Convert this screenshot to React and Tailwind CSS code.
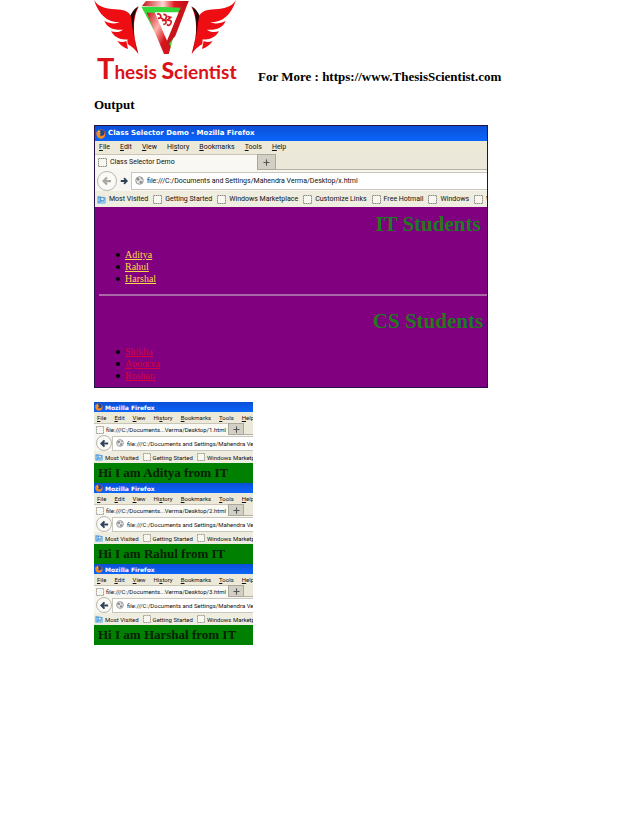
import React from "react";
import { Plus } from "lucide-react";

const menuItems = [
  ["", "F", "ile"],
  ["", "E", "dit"],
  ["", "V", "iew"],
  ["Hi", "s", "tory"],
  ["", "B", "ookmarks"],
  ["", "T", "ools"],
  ["", "H", "elp"],
];

const bookmarks = [
  "Getting Started",
  "Windows Marketplace",
  "Customize Links",
  "Free Hotmail",
  "Windows",
  "W",
];

const large = {
  text: "text-[7px]",
  title: "h-[15px] text-[7px] px-px gap-[2px]",
  titleIcon: "size-[10px]",
  menu: "h-[13px] pl-[4px] gap-[10px]",
  tabs: "h-4",
  tab: "w-[162px] pl-[3px] gap-[3px]",
  plusTab: "w-[19px]",
  bar: "h-[21px] pl-[2px]",
  input: "h-4 text-[7px]",
  marks: "h-[16px] pl-[2px] gap-[5px]",
  markGap: "gap-[3px]",
  box: "size-[9px]",
  back: "size-[20px]",
};

const small = {
  text: "text-[6px]",
  title: "h-[10px] text-[6px] px-px gap-[2px]",
  titleIcon: "size-[8px]",
  menu: "h-[11px] pl-[3px] gap-[8px]",
  tabs: "h-3",
  tab: "w-[134px] pl-[2px] gap-[2px]",
  plusTab: "w-4",
  bar: "h-4 pl-[2px]",
  input: "h-[13px] text-[6px]",
  marks: "h-3 pl-px gap-[4px]",
  markGap: "gap-[2px]",
  box: "size-[8px]",
  back: "size-4",
};

const FirefoxIcon = ({ className }) => (
  <svg viewBox="0 0 20 20" className={className}>
    <circle cx="10" cy="10" r="9" fill="#e2661a" />
    <circle cx="11" cy="8" r="6" fill="#25468f" />
    <path d="M1 5c2 1 3 2 6 2 2 0 3 1 2 3-2 1-1 4 2 4 4 0 6-2 6-6 3 6-1 11-7 11S0 14 1 5z" fill="#f08a24" />
    <path d="M4 3c2 0 4 1 5 3l-4 2z" fill="#f7c04a" />
  </svg>
);

const Globe = ({ className }) => (
  <svg viewBox="0 0 20 20" className={className}>
    <circle cx="10" cy="10" r="8.5" fill="#e4e4e4" stroke="#8f8f8f" strokeWidth="2" />
    <path d="M4 6c3-3 5-1 6 1s-2 3-4 3-3-2-2-4zM10 12c2-2 5-1 6 0-1 3-3 5-5 5 0-2-1-3-1-5zM12 3l4 3-2 2z" fill="#8a8a8a" />
  </svg>
);

const Arrow = ({ className, color, flip }) => (
  <svg viewBox="0 0 20 20" className={className}>
    <path
      d={flip ? "M2 10h14M10 3l7 7-7 7" : "M18 10H4M10 3l-7 7 7 7"}
      fill="none"
      stroke={color}
      strokeWidth="4.5"
    />
  </svg>
);

const VisitedIcon = ({ className }) => (
  <svg viewBox="0 0 20 20" className={className}>
    <path d="M1 3h7l2 2h9v14H1z" fill="#5aa5e0" />
    <path d="M3 7h15v11H3z" fill="#8cc6f0" />
    <circle cx="12" cy="9" r="4" fill="#d9efff" stroke="#2c6cab" strokeWidth="1.5" />
    <path d="M9 12l-5 5" stroke="#2c6cab" strokeWidth="2" />
  </svg>
);

const PageIcon = ({ className }) => (
  <svg viewBox="0 0 18 18" className={`shrink-0 ${className}`}>
    <rect x="1" y="1" width="16" height="16" fill="#f8f7f0" stroke="#8f8f88" strokeWidth="2" strokeDasharray="3 1" />
  </svg>
);

const Browser = ({ s, title, tab, url, marks, forward, children }) => (
  <div className={`overflow-hidden whitespace-nowrap font-['Roboto',sans-serif] text-[#111] ${s.text}`}>
    <div className={`flex items-center bg-linear-to-b from-[#0c4fd6] to-[#0a66fb] font-bold text-white font-['DejaVu_Sans',sans-serif] ${s.title}`}>
      <FirefoxIcon className={`shrink-0 ${s.titleIcon}`} />
      <span>{title}</span>
    </div>
    <div className={`flex items-center bg-[#ece9d8] ${s.menu}`}>
      {menuItems.map(([before, key, after]) => (
        <button key={key + after} type="button" className="shrink-0">
          {before}
          <u>{key}</u>
          {after}
        </button>
      ))}
    </div>
    <div className={`flex bg-[#ebe8d9] ${s.tabs}`}>
      <button type="button" className={`flex shrink-0 items-center border-t border-[#c9c6b8] bg-[#f9f8f3] ${s.tab}`}>
        <PageIcon className={s.box} />
        <span>{tab}</span>
      </button>
      <button
        type="button"
        aria-label="New tab"
        className={`flex shrink-0 items-center justify-center border border-[#aaa89c] bg-[#d2d0c4] ${s.plusTab}`}
      >
        <Plus size={9} strokeWidth={3} color="#555" />
      </button>
      <div className="flex-1 border-b border-[#b5b2a4]" />
    </div>
    <div className={`flex items-center bg-[#f7f6f0] ${s.bar}`}>
      <button
        type="button"
        aria-label="Back"
        className={`flex shrink-0 items-center justify-center rounded-full border border-[#b9b7ac] bg-[#fbfaf6] ${s.back}`}
      >
        <Arrow className={forward ? "size-[10px]" : "size-[9px]"} color={forward ? "#a9a9a4" : "#2f4358"} />
      </button>
      {forward && (
        <button type="button" aria-label="Forward" className="mx-[3px] shrink-0">
          <Arrow className="size-[8px]" color="#2f4358" flip />
        </button>
      )}
      <div className="flex min-w-0 flex-1 items-center gap-[3px] border-y border-l border-[#c9c7bc] bg-white pl-[3px]">
        <Globe className={`shrink-0 ${s.box}`} />
        <input aria-label="Address" readOnly value={url} className={`min-w-0 flex-1 bg-transparent outline-none ${s.input}`} />
      </div>
    </div>
    <div className={`flex items-center bg-[#efede0] ${s.marks}`}>
      <button type="button" className={`flex shrink-0 items-center ${s.markGap}`}>
        <VisitedIcon className={s.box} />
        Most Visited
      </button>
      {marks.map((name) => (
        <button key={name} type="button" className={`flex shrink-0 items-center ${s.markGap}`}>
          <PageIcon className={s.box} />
          {name}
        </button>
      ))}
    </div>
    {children}
  </div>
);

const StudentList = ({ names, color }) => (
  <ul className="pl-[17px] text-left text-[10px] leading-3">
    {names.map((name) => (
      <li key={name} className="flex items-center gap-[5px] before:size-1 before:rounded-full before:bg-black">
        <a href="#" className={`underline ${color}`}>{name}</a>
      </li>
    ))}
  </ul>
);

const Wing = () => (
  <g>
    <path
      d="M18 0C28 18 50 27 82 28C106 29 121 34 127 46L133 58C137 40 139 29 152 20C142 38 136 65 138 95C139 120 147 142 151 162C143 150 131 139 119 132L118 118C99 121 79 112 69 94C83 98 96 97 105 89C79 91 57 84 49 62C63 70 80 73 96 67C62 68 33 48 18 0Z"
      fill="#ee0d12"
    />
    <path d="M88 123C100 127 108 126 115 123L120 147C104 142 95 132 88 123Z" fill="#ee0d12" />
    <path d="M152 18C134 29 131 42 127 46C133 60 132 100 151 163C142 139 137 111 137 81C137 53 141 34 152 18Z" fill="#240508" />
  </g>
);

const Logo = () => (
  <div className="w-[142px] shrink-0">
    <svg viewBox="18 0 426 165" className="block h-[55px] w-full" role="img" aria-label="Winged triangle">
      <defs>
        <linearGradient id="bar" x1="0" x2="1">
          <stop offset="0" stopColor="#c5101a" />
          <stop offset=".45" stopColor="#ffd8d2" />
          <stop offset=".7" stopColor="#df1820" />
          <stop offset="1" stopColor="#b80d16" />
        </linearGradient>
        <linearGradient id="side" x1="0" y1="0" x2="1" y2="1">
          <stop offset="0" stopColor="#c5101a" />
          <stop offset=".4" stopColor="#ffb5ad" />
          <stop offset=".7" stopColor="#d4141c" />
        </linearGradient>
      </defs>
      <Wing />
      <g transform="translate(462 0) scale(-1 1)">
        <Wing />
      </g>
      <path d="M160 20L200 20L292 22L262 90L242 162H236Z" fill="#35d83a" />
      <path d="M162 18L174 3H302L292 24Z" fill="url(#bar)" />
      <path d="M176 38H205L248 140L242 162H228Z" fill="url(#side)" />
      <path d="M278 24L302 3L262 108L240 134L232 110Z" fill="#c9141c" />
      <path d="M200 37H272L237 122Z" fill="#fff" />
      <path
        d="M207 43q8-4 11 4t-8 8m5-4l12 8m-1-16q12 0 8 12l-6 8m10-14l10 3-10 8 10 2m-26 0q10-4 12 3t-8 8m18-12q9 1 4 10t-11 2"
        fill="none"
        stroke="#d31a22"
        strokeWidth="5"
      />
    </svg>
    <div className="whitespace-nowrap pl-[3px] font-['Lato',sans-serif] text-[19px] font-bold leading-[26px] text-[#dc1219]">
      <span className="text-[29px]">T</span>hesis <span className="text-[23px] font-black">S</span>cientis<span className="font-black">t</span>
    </div>
  </div>
);

const students = [
  { name: "Aditya", file: "1.html" },
  { name: "Rahul", file: "2.html" },
  { name: "Harshal", file: "3.html" },
];

export default function App() {
  return (
    <main className="min-h-screen bg-white pl-[94px] font-['Liberation_Serif',serif] text-black">
      <header className="flex items-end gap-[22px]">
        <Logo />
        <p className="whitespace-nowrap text-[13px] font-bold leading-4">
          For More : <a href="https://www.ThesisScientist.com">https://www.ThesisScientist.com</a>
        </p>
      </header>
      <h1 className="mt-3 text-[13px] font-bold leading-4">Output</h1>

      <section className="mt-3 max-w-[394px] border border-[#25104a]">
        <Browser
          s={large}
          title="Class Selector Demo - Mozilla Firefox"
          tab="Class Selector Demo"
          url="file:///C:/Documents and Settings/Mahendra Verma/Desktop/x.html"
          marks={bookmarks}
          forward
        >
          <div className="overflow-hidden bg-[#800080] pb-[5px] pl-[4px] font-['Liberation_Serif',serif]">
            <div className="w-[658px] text-center">
              <h2 className="pt-[5px] text-[21px] font-bold leading-6 text-[#1f7a1f]">IT Students</h2>
              <div className="pt-[13px]">
                <StudentList names={["Aditya", "Rahul", "Harshal"]} color="text-[#ffd84a]" />
              </div>
              <hr className="mt-[9px] border-t-2 border-[#a76aa7]" />
              <h2 className="pt-[13px] text-[21px] font-bold leading-6 text-[#1f7a1f]">CS Students</h2>
              <div className="pt-[13px]">
                <StudentList names={["Shikha", "Apoorva", "Roshan"]} color="text-[#d8003c]" />
              </div>
            </div>
          </div>
        </Browser>
      </section>

      <section className="mt-[14px] max-w-[159px]">
        {students.map(({ name, file }) => (
          <Browser
            key={name}
            s={small}
            title="Mozilla Firefox"
            tab={`file:///C:/Documents...Verma/Desktop/${file}`}
            url="file:///C:/Documents and Settings/Mahendra Verma"
            marks={bookmarks.slice(0, 2)}
          >
            <h2 className="bg-[#008000] pl-[4px] font-['Liberation_Serif',serif] text-[13px] font-bold leading-5 text-[#062006]">
              Hi I am {name} from IT
            </h2>
          </Browser>
        ))}
      </section>
    </main>
  );
}
